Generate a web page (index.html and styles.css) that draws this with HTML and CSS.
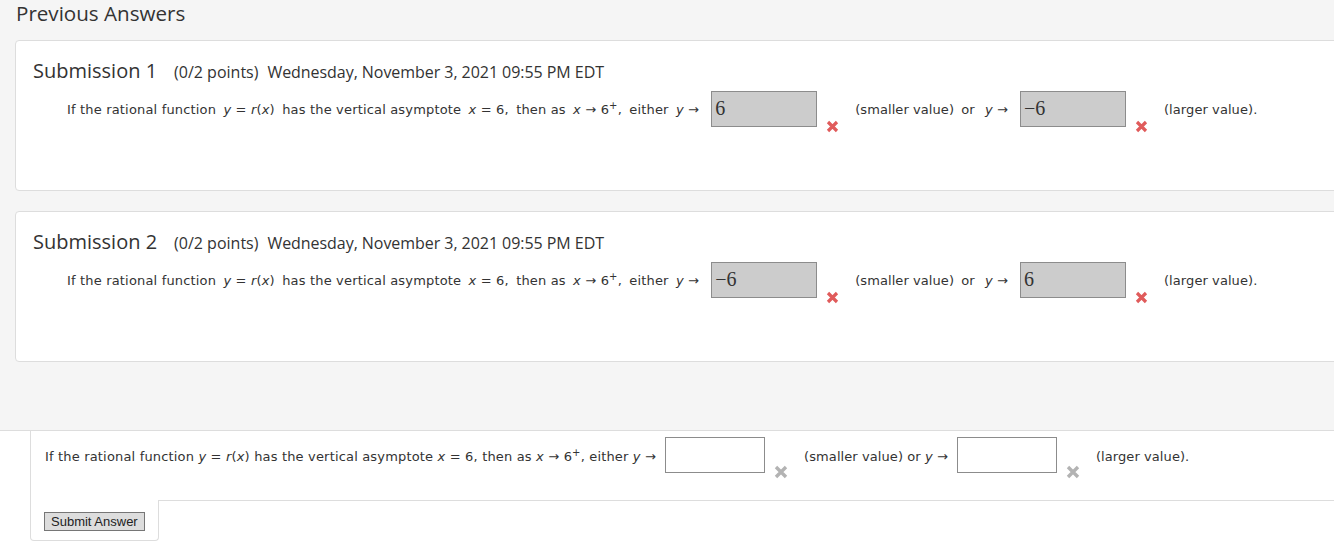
FILE: index.html
```html
<!DOCTYPE html>
<html>
<head>
<meta charset="utf-8">
<link rel="stylesheet" href="styles.css">
</head>
<body>
<div class="prev">
  <h2 class="prev-title">Previous Answers</h2>

  <div class="card">
    <div class="card-head"><span class="sub">Submission 1</span><span class="pts">(0/2 points)</span><span class="date">Wednesday, November 3, 2021 09:55 PM EDT</span></div>
    <div class="q q-prev">
      <span class="txt">If the rational function <span class="m"><i>y</i> = <i>r</i>(<i>x</i>)</span> has the vertical asymptote <span class="m"><i>x</i> = 6,</span> then as <span class="m"><i>x</i> → 6<sup>+</sup>,</span> either <span class="m"><i>y</i> →</span></span>
      <span class="box filled">6</span>
      <svg class="xic" width="13" height="13" viewBox="0 0 13 13"><path d="M2 2 L11 11 M11 2 L2 11" stroke="#e05b5b" stroke-width="3.2"/></svg>
      <span class="txt after">(smaller value) <span class="m">or</span> <span class="m"><i>y</i> →</span></span>
      <span class="box filled">−6</span>
      <svg class="xic" width="13" height="13" viewBox="0 0 13 13"><path d="M2 2 L11 11 M11 2 L2 11" stroke="#e05b5b" stroke-width="3.2"/></svg>
      <span class="txt after">(larger value).</span>
    </div>
  </div>

  <div class="card card2">
    <div class="card-head"><span class="sub">Submission 2</span><span class="pts">(0/2 points)</span><span class="date">Wednesday, November 3, 2021 09:55 PM EDT</span></div>
    <div class="q q-prev">
      <span class="txt">If the rational function <span class="m"><i>y</i> = <i>r</i>(<i>x</i>)</span> has the vertical asymptote <span class="m"><i>x</i> = 6,</span> then as <span class="m"><i>x</i> → 6<sup>+</sup>,</span> either <span class="m"><i>y</i> →</span></span>
      <span class="box filled">−6</span>
      <svg class="xic" width="13" height="13" viewBox="0 0 13 13"><path d="M2 2 L11 11 M11 2 L2 11" stroke="#e05b5b" stroke-width="3.2"/></svg>
      <span class="txt after">(smaller value) <span class="m">or</span> <span class="m"><i>y</i> →</span></span>
      <span class="box filled">6</span>
      <svg class="xic" width="13" height="13" viewBox="0 0 13 13"><path d="M2 2 L11 11 M11 2 L2 11" stroke="#e05b5b" stroke-width="3.2"/></svg>
      <span class="txt after">(larger value).</span>
    </div>
  </div>
</div>

<div class="answer">
  <div class="q q-cur">
    <span class="txt">If the rational function <i>y</i> = <i>r</i>(<i>x</i>) has the vertical asymptote <i>x</i> = 6, then as <i>x</i> → 6<sup>+</sup>, either <i>y</i> →</span>
    <span class="box empty"></span>
    <svg class="xic" width="14" height="14" viewBox="0 0 14 14"><path d="M2 2 L12 12 M12 2 L2 12" stroke="#b3b3b3" stroke-width="3.4"/></svg>
    <span class="txt after">(smaller value) or <i>y</i> →</span>
    <span class="box empty"></span>
    <svg class="xic" width="14" height="14" viewBox="0 0 14 14"><path d="M2 2 L12 12 M12 2 L2 12" stroke="#b3b3b3" stroke-width="3.4"/></svg>
    <span class="txt after">(larger value).</span>
  </div>
  <div class="actions">
    <div class="btnbox"><button class="submit">Submit Answer</button></div>
    <div class="fill"></div>
  </div>
</div>
</body>
</html>
```

FILE: styles.css
```css
html, body {
  margin: 0;
  padding: 0;
  background: #ffffff;
  overflow: hidden;
}
body {
  width: 1334px;
  height: 554px;
  color: #333333;
}
.prev {
  background: #f5f5f5;
  padding: 0 0 68px 15px;
  border-bottom: 1px solid #dddddd;
}
.prev-title {
  margin: 0;
  padding-left: 1px;
  font-family: "Open Sans", sans-serif;
  font-weight: 400;
  font-size: 20.6px;
  line-height: 27px;
  color: #333333;
}
.card {
  margin-top: 13px;
  width: 1340px;
  height: 149px;
  box-sizing: content-box;
  background: #ffffff;
  border: 1px solid #dddddd;
  border-radius: 4px;
}
.card2 {
  margin-top: 20px;
}
.card-head {
  margin: 18px 0 0 17px;
  height: 24px;
  display: flex;
  align-items: baseline;
  font-family: "Open Sans", sans-serif;
  color: #333333;
}
.sub {
  font-size: 20px;
  line-height: 24px;
}
.pts {
  font-size: 16px;
  margin-left: 17px;
}
.date {
  font-size: 16px;
  margin-left: 9px;
  letter-spacing: -0.05px;
}
.q {
  display: flex;
  align-items: center;
  font-family: "DejaVu Sans", Verdana, sans-serif;
  font-size: 13px;
  color: #333333;
  white-space: nowrap;
}
.txt {
  letter-spacing: 0.17px;
  padding-top: 1px;
}
.txt.after {
  letter-spacing: 0.08px;
}
.q-prev {
  margin: 8px 0 0 51px;
  height: 36px;
}
.q-cur {
  margin-left: 30px;
  border-left: 1px solid #dddddd;
  padding: 6px 0 27px 14px;
  height: 36px;
}
.q-cur .txt {
  padding-top: 3px;
}
.m {
  margin: 0 3px;
}
.q i {
  font-style: italic;
}
.q sup {
  font-size: 10px;
  line-height: 0;
  vertical-align: 5px;
}
.box {
  box-sizing: border-box;
  height: 36px;
  margin-left: 9px;
  border: 1px solid #8c8c8c;
  font-family: "Liberation Serif", serif;
  font-size: 20px;
  line-height: 24px;
  padding: 4px 3px;
  color: #333333;
}
.filled {
  width: 106px;
  background: #cccccc;
}
.empty {
  width: 100px;
  background: #ffffff;
}
.xic {
  margin-left: 9px;
  margin-top: 34px;
  flex: none;
}
.after {
  margin-left: 16px;
}
.actions {
  display: flex;
  margin-left: 30px;
}
.btnbox {
  width: 114px;
  padding: 12px 0 9px 13px;
  border-left: 1px solid #dddddd;
  border-right: 1px solid #dddddd;
  border-bottom: 1px solid #dddddd;
  border-radius: 0 0 4px 4px;
}
.fill {
  flex: 1;
  border-top: 1px solid #dddddd;
}
.submit {
  display: block;
  height: 19px;
  margin: 0;
  padding: 0 6px;
  font-family: "Liberation Sans", Arial, sans-serif;
  font-size: 13px;
  line-height: 17px;
  color: #222222;
  background: #dddddd;
  border: 1px solid #767676;
  border-radius: 0;
}
```
